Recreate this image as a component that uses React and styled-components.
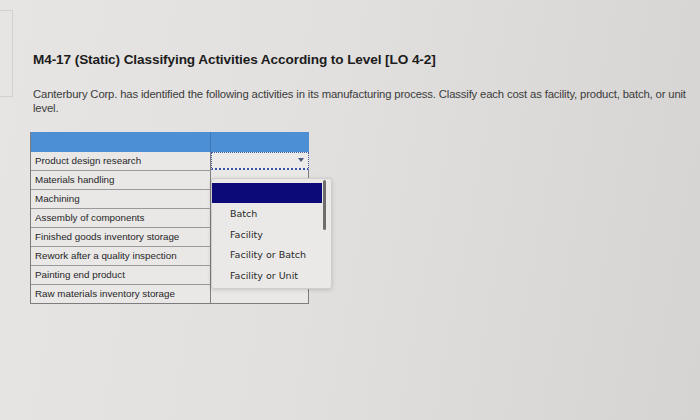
import React from 'react';
import styled, { createGlobalStyle } from 'styled-components';

const GlobalStyle = createGlobalStyle`
  html, body {
    margin: 0;
    padding: 0;
  }
  body {
    width: 700px;
    height: 420px;
    overflow: hidden;
    background: linear-gradient(100deg, #e6e5e3 0%, #e1e0de 45%, #d6d4d2 100%);
    font-family: "Liberation Sans", Arial, sans-serif;
  }
`;

const Page = styled.div`
  position: relative;
  height: 420px;
  padding: 52px 0 0 33px;
  box-sizing: border-box;
`;

const EdgePanel = styled.div`
  position: absolute;
  left: 0;
  top: 10px;
  width: 12px;
  height: 85px;
  border: 1px solid #d2d1cf;
  border-left: none;
`;

const Title = styled.h1`
  margin: 0;
  font-size: 13.6px;
  line-height: 16px;
  font-weight: 700;
  color: #1c1c1c;
  letter-spacing: -0.1px;
`;

const Intro = styled.p`
  margin: 19px 0 0;
  width: 660px;
  font-size: 11.3px;
  line-height: 14px;
  color: #3b3b3b;
  letter-spacing: -0.15px;
`;

const TableWrap = styled.div`
  position: relative;
  margin: 17px 0 0 -3px;
  width: 279px;
`;

const Table = styled.div`
  display: grid;
  grid-template-columns: 180px 98px;
  border: 1px solid #7d7d7d;
  border-top: none;
  background: #e9e8e6;
`;

const HeaderCell = styled.div`
  height: 20px;
  background: #4d8fd5;
  border-right: ${(p) => (p.$last ? 'none' : '1px solid #3f78b6')};
`;

const NameCell = styled.div`
  height: 18px;
  line-height: 18px;
  padding-left: 4px;
  font-size: 9.8px;
  color: #262626;
  border-bottom: ${(p) => (p.$last ? 'none' : '1px solid #9a9a9a')};
  border-right: 1px solid #7d7d7d;
  white-space: nowrap;
`;

const ValueCell = styled.div`
  position: relative;
  height: 18px;
  box-sizing: border-box;
  border-bottom: ${(p) => (p.$last ? 'none' : '1px solid #9a9a9a')};
  ${(p) =>
    p.$focus &&
    `
    border: 1px dotted #3d5c9e;
    border-bottom: 2px dotted #3556a8;
    background: #ecebea;
  `}
`;

const Arrow = styled.span`
  position: absolute;
  right: 4px;
  top: 5px;
  width: 0;
  height: 0;
  border-left: 3px solid transparent;
  border-right: 3px solid transparent;
  border-top: 4px solid #4a5a7a;
`;

const Dropdown = styled.div`
  position: absolute;
  left: 181px;
  top: 46px;
  width: 121px;
  height: 111px;
  background: #eae9e7;
  border: 1px solid #cfcecc;
  border-radius: 3px;
  box-shadow: 0 1px 4px rgba(0, 0, 0, 0.15);
  box-sizing: border-box;
`;

const Selected = styled.div`
  margin-top: 4px;
  height: 20px;
  width: 110px;
  background: #0b0a78;
`;

const Options = styled.div`
  padding-top: 1px;
`;

const Option = styled.div`
  height: 20.5px;
  line-height: 20.5px;
  padding-left: 18px;
  font-family: "DejaVu Sans", Verdana, sans-serif;
  font-size: 9.5px;
  color: #2a2a2a;
  white-space: nowrap;
`;

const Scrollbar = styled.div`
  position: absolute;
  right: 5px;
  top: 1px;
  width: 3px;
  height: 50px;
  border-radius: 2px;
  background: #6e6d6c;
`;

const rows = [
  'Product design research',
  'Materials handling',
  'Machining',
  'Assembly of components',
  'Finished goods inventory storage',
  'Rework after a quality inspection',
  'Painting end product',
  'Raw materials inventory storage',
];

const options = ['Batch', 'Facility', 'Facility or Batch', 'Facility or Unit'];

export default function App() {
  return (
    <>
      <GlobalStyle />
      <Page>
        <EdgePanel />
        <Title>M4-17 (Static) Classifying Activities According to Level [LO 4-2]</Title>
        <Intro>
          Canterbury Corp. has identified the following activities in its manufacturing process. Classify each
          cost as facility, product, batch, or unit level.
        </Intro>
        <TableWrap>
          <Table>
            <HeaderCell />
            <HeaderCell $last />
            {rows.map((r, i) => (
              <React.Fragment key={r}>
                <NameCell $last={i === rows.length - 1}>{r}</NameCell>
                <ValueCell $focus={i === 0} $last={i === rows.length - 1}>
                  {i === 0 && <Arrow />}
                </ValueCell>
              </React.Fragment>
            ))}
          </Table>
          <Dropdown>
            <Selected />
            <Options>
              {options.map((o) => (
                <Option key={o}>{o}</Option>
              ))}
            </Options>
            <Scrollbar />
          </Dropdown>
        </TableWrap>
      </Page>
    </>
  );
}
